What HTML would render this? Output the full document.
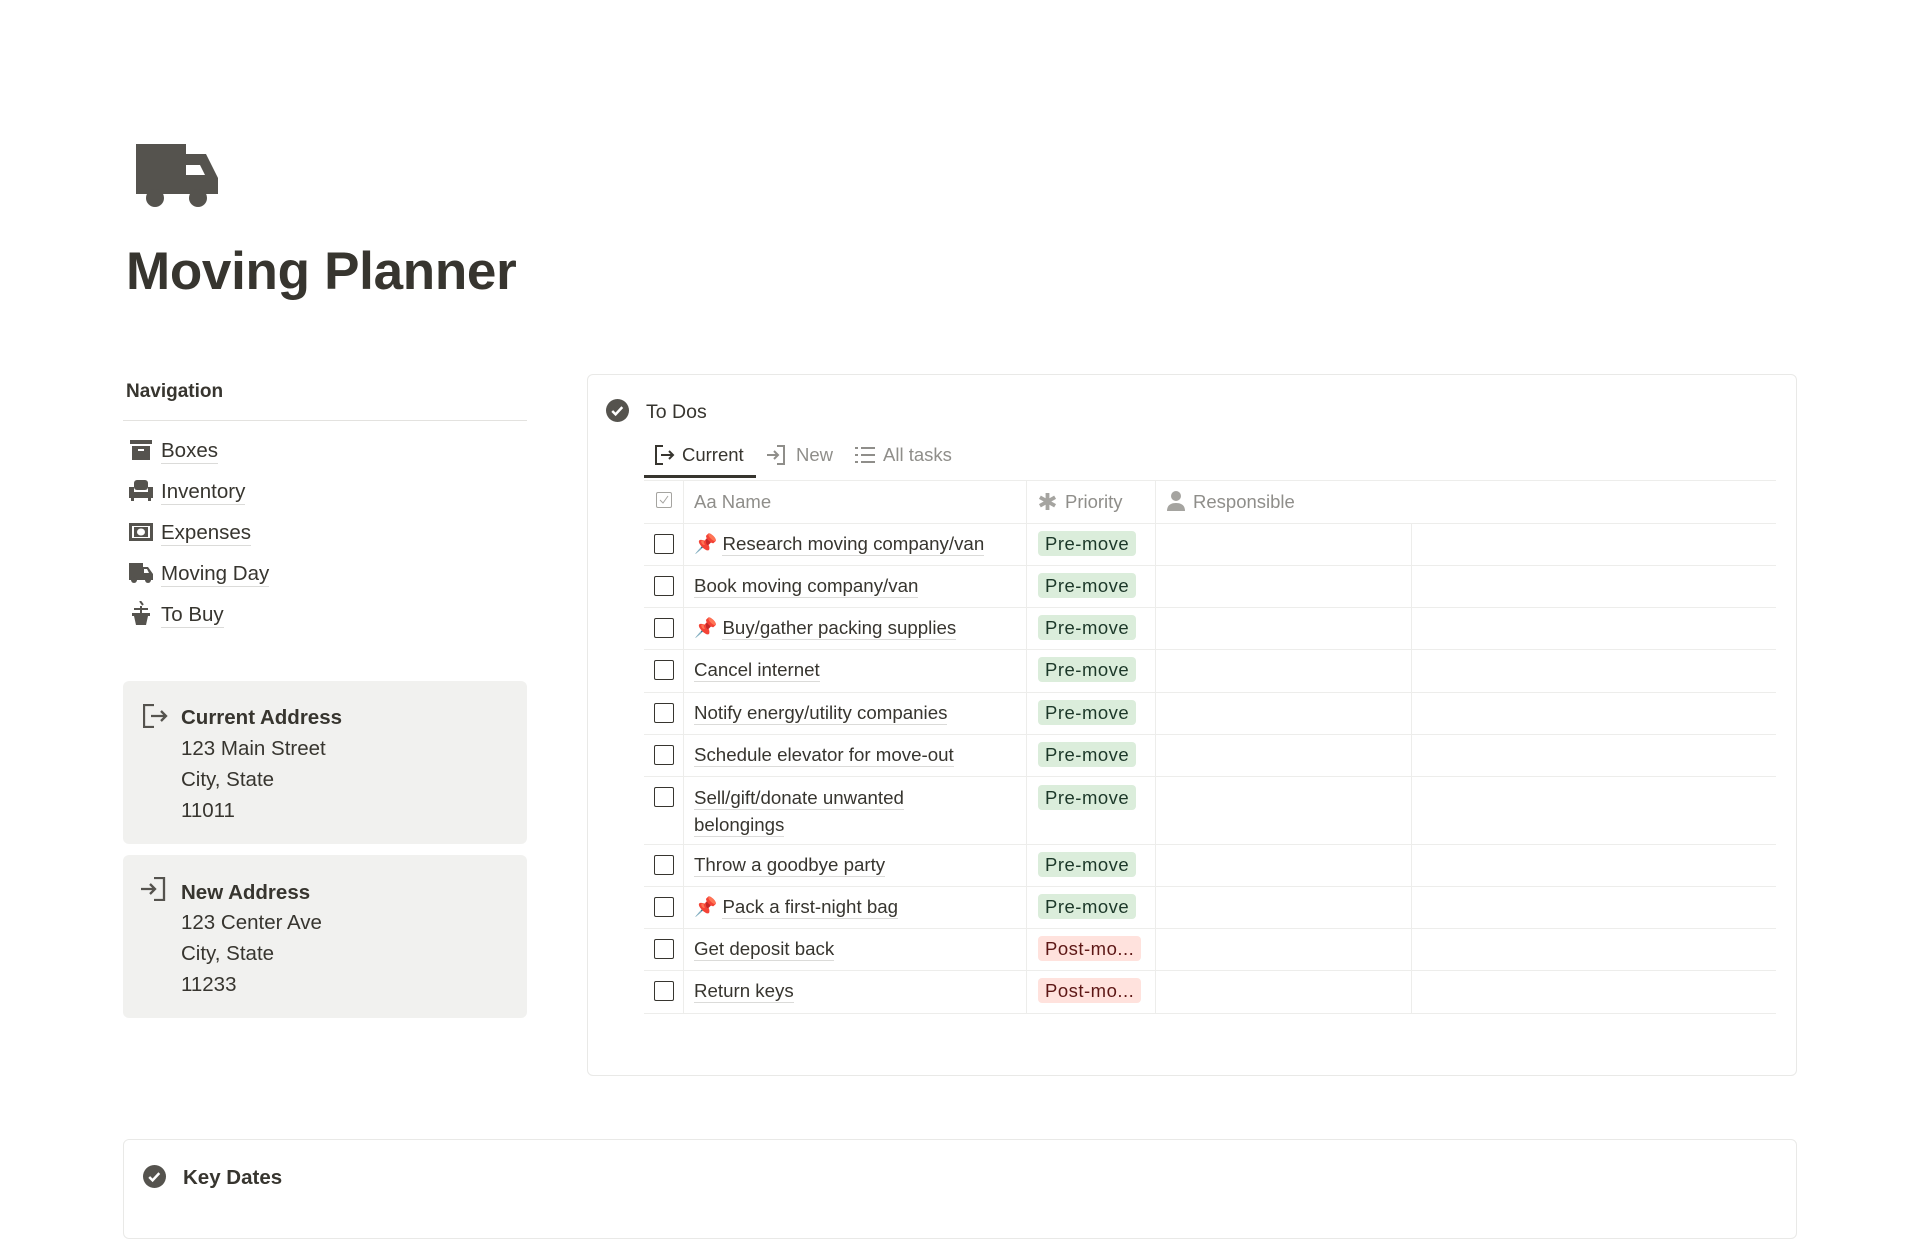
<!DOCTYPE html>
<html><head><meta charset="utf-8"><style>
*{box-sizing:border-box;margin:0;padding:0}
body{width:1920px;height:1199px;background:#fff;font-family:"Liberation Sans",sans-serif;color:#37352f;position:relative;overflow:hidden}
.a{position:absolute;white-space:nowrap}
.u{border-bottom:1px solid rgba(55,53,47,.18);padding-bottom:1px}
.nav{font-size:20.5px;left:161px}
.ic{position:absolute}
.box{position:absolute;left:123px;width:404px;background:#f1f1ef;border-radius:6px}
.bt{font-size:20.5px;font-weight:bold;left:181px}
.bl{font-size:20.5px;left:181px}
.card{position:absolute;border:1.5px solid #e9e9e7;border-radius:6px;background:#fff}
.hl{position:absolute;left:644px;width:1132px;height:1px;background:#ededeb}
.vl{position:absolute;width:1px;background:#ededeb}
.cb{position:absolute;left:654px;width:20px;height:20px;border:1.8px solid #37352f;border-radius:2px}
.nm{position:absolute;left:694px;font-size:18.7px;white-space:nowrap}
.tag{position:absolute;left:1038px;height:25px;line-height:25px;padding:0 7px;border-radius:4px;font-size:18.5px;letter-spacing:.5px}
.g{background:#dbeddb;color:#1c3829}
.r{background:#ffe2dd;color:#5d1715}
.hd{position:absolute;font-size:18.5px;color:#8f8e8a;top:491px}
.tab{position:absolute;font-size:18.5px;top:444px}
</style></head><body>

<svg class="ic" style="left:136px;top:144px" width="82" height="64" viewBox="0 0 82 64"><path fill="#55534e" d="M0 0h50v10h20l12 24v16H0z"/><path fill="#fff" d="M50 20h19l-5-10H50z" transform="translate(0 11)"/><circle cx="19" cy="54" r="9" fill="#55534e"/><circle cx="62" cy="54" r="9" fill="#55534e"/></svg>

<div class="a" style="left:126px;top:241px;font-size:53px;font-weight:bold;letter-spacing:-.3px">Moving Planner</div>

<div class="a" style="left:126px;top:381px;font-size:19px;font-weight:bold">Navigation</div>
<div class="a" style="left:123px;top:420px;width:404px;height:1px;background:#e3e2df"></div>

<svg class="ic" style="left:130px;top:440px" width="22" height="20" viewBox="0 0 22 20"><rect x="0" y="0" width="22" height="4" fill="#55534e"/><rect x="2" y="6" width="18" height="14" fill="#55534e"/><rect x="8" y="9" width="6" height="2" fill="#fff"/></svg>
<div class="a nav" style="top:439px"><span class="u">Boxes</span></div>
<svg class="ic" style="left:129px;top:480px" width="24" height="22" viewBox="0 0 24 22"><rect x="5" y="0" width="14" height="10" rx="3" fill="#55534e"/><rect x="0" y="7" width="5" height="10" fill="#55534e"/><rect x="19" y="7" width="5" height="10" fill="#55534e"/><rect x="0" y="12" width="24" height="6" fill="#55534e"/><rect x="2" y="17" width="3" height="4" fill="#55534e"/><rect x="19" y="17" width="3" height="4" fill="#55534e"/></svg>
<div class="a nav" style="top:480px"><span class="u">Inventory</span></div>
<svg class="ic" style="left:129px;top:523px" width="24" height="18" viewBox="0 0 24 18"><rect width="24" height="18" fill="#55534e"/><rect x="3" y="3" width="18" height="12" fill="#fff"/><rect x="5" y="4" width="14" height="10" fill="#55534e"/><ellipse cx="12" cy="9" rx="4" ry="3.5" fill="#fff"/></svg>
<div class="a nav" style="top:521px"><span class="u">Expenses</span></div>
<svg class="ic" style="left:129px;top:563px" width="24" height="20" viewBox="0 0 24 20"><path fill="#55534e" d="M0 0h14v4h5l5 7v6H0z"/><circle cx="5" cy="17" r="3" fill="#55534e"/><circle cx="19" cy="17" r="3" fill="#55534e"/><path d="M15 6h3l2 4h-5z" fill="#fff"/></svg>
<div class="a nav" style="top:562px"><span class="u">Moving Day</span></div>
<svg class="ic" style="left:131px;top:601px" width="20" height="24" viewBox="0 0 20 24"><path d="M9 0l3 4M10 5v8" stroke="#55534e" stroke-width="2" fill="none"/><rect x="3" y="7" width="14" height="2" fill="#55534e"/><rect x="1" y="12" width="18" height="3" fill="#55534e"/><path d="M3 15h14l-2 9H5z" fill="#55534e"/></svg>
<div class="a nav" style="top:603px"><span class="u">To Buy</span></div>

<div class="box" style="top:681px;height:163px"></div>
<svg class="ic" style="left:143px;top:704px" width="26" height="24" viewBox="0 0 26 24"><path d="M11 1H1v22h10M8 12h15M18 7l5 5-5 5" stroke="#55534e" stroke-width="2.3" fill="none"/></svg>
<div class="a bt" style="top:706px">Current Address</div>
<div class="a bl" style="top:737px">123 Main Street</div>
<div class="a bl" style="top:768px">City, State</div>
<div class="a bl" style="top:799px">11011</div>

<div class="box" style="top:855px;height:163px"></div>
<svg class="ic" style="left:140px;top:877px" width="26" height="24" viewBox="0 0 26 24"><path d="M14 1h10v22H14M1 12h14M10 7l5 5-5 5" stroke="#55534e" stroke-width="2.3" fill="none"/></svg>
<div class="a bt" style="top:881px">New Address</div>
<div class="a bl" style="top:911px">123 Center Ave</div>
<div class="a bl" style="top:942px">City, State</div>
<div class="a bl" style="top:973px">11233</div>

<div class="card" style="left:587px;top:374px;width:1210px;height:702px"></div>
<svg class="ic" style="left:606px;top:399px" width="23" height="23" viewBox="0 0 24 24"><circle cx="12" cy="12" r="12" fill="#55534e"/><path d="M6.5 12.5l3.5 3.5 7-7.5" stroke="#fff" stroke-width="2.6" fill="none"/></svg>
<div class="a" style="left:646px;top:401px;font-size:19.5px;font-weight:500">To Dos</div>

<svg class="ic" style="left:655px;top:445px" width="20" height="20" viewBox="0 0 20 20"><path d="M8 1H1v18h7M6 10h12M14 6l4 4-4 4" stroke="#37352f" stroke-width="2" fill="none"/></svg>
<div class="tab" style="left:682px">Current</div>
<svg class="ic" style="left:766px;top:445px" width="20" height="20" viewBox="0 0 20 20"><path d="M11 1h7v18h-7M1 10h11M8 6l4 4-4 4" stroke="#8f8e8a" stroke-width="2" fill="none"/></svg>
<div class="tab" style="left:796px;color:#8f8e8a">New</div>
<svg class="ic" style="left:855px;top:446px" width="20" height="18" viewBox="0 0 20 18"><path d="M0 2h3M6 2h14M0 9h3M6 9h14M0 16h3M6 16h14" stroke="#8f8e8a" stroke-width="2" fill="none"/></svg>
<div class="tab" style="left:883px;color:#8f8e8a">All tasks</div>
<div class="a" style="left:644px;top:475px;width:112px;height:3px;background:#37352f"></div>

<div class="hl" style="top:480px"></div>
<div class="hl" style="top:523px"></div>
<div class="hl" style="top:565px"></div>
<div class="hl" style="top:607px"></div>
<div class="hl" style="top:649px"></div>
<div class="hl" style="top:692px"></div>
<div class="hl" style="top:734px"></div>
<div class="hl" style="top:776px"></div>
<div class="hl" style="top:844px"></div>
<div class="hl" style="top:886px"></div>
<div class="hl" style="top:928px"></div>
<div class="hl" style="top:970px"></div>
<div class="hl" style="top:1013px"></div>
<div class="vl" style="left:683px;top:481px;height:532px"></div>
<div class="vl" style="left:1026px;top:481px;height:532px"></div>
<div class="vl" style="left:1155px;top:481px;height:532px"></div>
<div class="vl" style="left:1411px;top:523px;height:490px"></div>

<svg class="ic" style="left:656px;top:492px" width="16" height="17" viewBox="0 0 16 17"><rect x=".5" y=".5" width="15" height="15" rx="1.5" stroke="#a5a4a0" fill="none"/><path d="M4 8l3 3 5-7" stroke="#a5a4a0" fill="none"/></svg>
<div class="hd" style="left:694px">Aa Name</div>
<svg class="ic" style="left:1038px;top:492px" width="19" height="19" viewBox="0 0 20 20"><path d="M10 1v18M2 5.5l16 9M2 14.5l16-9" stroke="#a5a4a0" stroke-width="4"/></svg>
<div class="hd" style="left:1065px">Priority</div>
<svg class="ic" style="left:1167px;top:491px" width="18" height="20" viewBox="0 0 18 20"><circle cx="9" cy="5" r="5" fill="#a5a4a0"/><path d="M0 20c0-6 4-8 9-8s9 2 9 8z" fill="#a5a4a0"/></svg>
<div class="hd" style="left:1193px">Responsible</div>

<div class="cb" style="top:534px"></div><div class="nm" style="top:533px">📌 <span class="u">Research moving company/van</span></div><div class="tag g" style="top:531px">Pre-move</div>
<div class="cb" style="top:576px"></div><div class="nm" style="top:575px"><span class="u">Book moving company/van</span></div><div class="tag g" style="top:573px">Pre-move</div>
<div class="cb" style="top:618px"></div><div class="nm" style="top:617px">📌 <span class="u">Buy/gather packing supplies</span></div><div class="tag g" style="top:615px">Pre-move</div>
<div class="cb" style="top:660px"></div><div class="nm" style="top:659px"><span class="u">Cancel internet</span></div><div class="tag g" style="top:657px">Pre-move</div>
<div class="cb" style="top:703px"></div><div class="nm" style="top:702px"><span class="u">Notify energy/utility companies</span></div><div class="tag g" style="top:700px">Pre-move</div>
<div class="cb" style="top:745px"></div><div class="nm" style="top:744px"><span class="u">Schedule elevator for move-out</span></div><div class="tag g" style="top:742px">Pre-move</div>
<div class="cb" style="top:787px"></div><div class="nm" style="top:784px;line-height:27px"><span class="u">Sell/gift/donate unwanted</span><br><span class="u">belongings</span></div><div class="tag g" style="top:785px">Pre-move</div>
<div class="cb" style="top:855px"></div><div class="nm" style="top:854px"><span class="u">Throw a goodbye party</span></div><div class="tag g" style="top:852px">Pre-move</div>
<div class="cb" style="top:897px"></div><div class="nm" style="top:896px">📌 <span class="u">Pack a first-night bag</span></div><div class="tag g" style="top:894px">Pre-move</div>
<div class="cb" style="top:939px"></div><div class="nm" style="top:938px"><span class="u">Get deposit back</span></div><div class="tag r" style="top:936px">Post-mo...</div>
<div class="cb" style="top:981px"></div><div class="nm" style="top:980px"><span class="u">Return keys</span></div><div class="tag r" style="top:978px">Post-mo...</div>

<div class="card" style="left:123px;top:1139px;width:1674px;height:100px"></div>
<svg class="ic" style="left:143px;top:1165px" width="23" height="23" viewBox="0 0 24 24"><circle cx="12" cy="12" r="12" fill="#55534e"/><path d="M6.5 12.5l3.5 3.5 7-7.5" stroke="#fff" stroke-width="2.6" fill="none"/></svg>
<div class="a" style="left:183px;top:1166px;font-size:20.5px;font-weight:bold">Key Dates</div>
</body></html>
